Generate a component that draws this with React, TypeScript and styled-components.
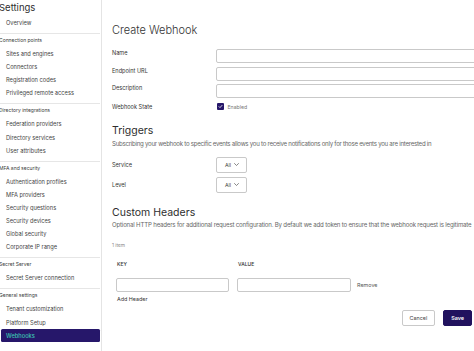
import styled, { createGlobalStyle } from "styled-components";

const GlobalStyle = createGlobalStyle`
  html, body {
    margin: 0;
    padding: 0;
    background: #ffffff;
    font-family: Inter, "Noto Sans", "Liberation Sans", sans-serif;
    color: #333333;
  }
  * {
    box-sizing: border-box;
  }
`;

type NavGroup = {
  title: string;
  items: string[];
};

const NAV_GROUPS: NavGroup[] = [
  {
    title: "Connection points",
    items: ["Sites and engines", "Connectors", "Registration codes", "Privileged remote access"],
  },
  {
    title: "Directory integrations",
    items: ["Federation providers", "Directory services", "User attributes"],
  },
  {
    title: "MFA and security",
    items: [
      "Authentication profiles",
      "MFA providers",
      "Security questions",
      "Security devices",
      "Global security",
      "Corporate IP range",
    ],
  },
  {
    title: "Secret Server",
    items: ["Secret Server connection"],
  },
  {
    title: "General settings",
    items: ["Tenant customization", "Platform Setup", "Webhooks"],
  },
];

const ACTIVE_ITEM = "Webhooks";

const FORM_FIELDS = ["Name", "Endpoint URL", "Description"];

const Chevron = () => (
  <svg width="5" height="3" viewBox="0 0 10 6" fill="none">
    <path d="M1 1l4 4 4-4" stroke="#555" strokeWidth="1.4" strokeLinecap="round" strokeLinejoin="round" />
  </svg>
);

const Check = () => (
  <svg width="5" height="5" viewBox="0 0 10 10" fill="none">
    <path d="M2 5.2l2 2 4-4.4" stroke="#fff" strokeWidth="1.6" strokeLinecap="round" strokeLinejoin="round" />
  </svg>
);

const App = () => {
  return (
    <>
      <GlobalStyle />
      <StyledPage>
        <StyledSidebar>
          <StyledSidebarTitle>Settings</StyledSidebarTitle>
          <StyledGroup>
            <StyledNavItem>Overview</StyledNavItem>
          </StyledGroup>
          {NAV_GROUPS.map((group) => (
            <StyledGroup key={group.title} $divided>
              <StyledGroupTitle>{group.title}</StyledGroupTitle>
              {group.items.map((item) => (
                <StyledNavItem key={item} $active={item === ACTIVE_ITEM}>
                  {item}
                </StyledNavItem>
              ))}
            </StyledGroup>
          ))}
        </StyledSidebar>

        <StyledMain>
          <StyledTitle>Create Webhook</StyledTitle>

          <StyledForm>
            {FORM_FIELDS.map((field) => (
              <StyledFieldRow key={field}>
                <StyledLabel>{field}</StyledLabel>
                <StyledWideInput />
              </StyledFieldRow>
            ))}
            <StyledStateRow>
              <StyledLabel>Webhook State</StyledLabel>
              <StyledCheckbox>
                <Check />
              </StyledCheckbox>
              <StyledCheckLabel>Enabled</StyledCheckLabel>
            </StyledStateRow>
          </StyledForm>

          <StyledSectionTitle $top={12.5}>Triggers</StyledSectionTitle>
          <StyledSectionText $tracking={-0.26}>
            Subscribing your webhook to specific events allows you to receive notifications only for those
            events you are interested in
          </StyledSectionText>

          <StyledSelects>
            {["Service", "Level"].map((name) => (
              <StyledSelectRow key={name}>
                <StyledLabel>{name}</StyledLabel>
                <StyledSelect>
                  All
                  <Chevron />
                </StyledSelect>
              </StyledSelectRow>
            ))}
          </StyledSelects>

          <StyledSectionTitle $top={13}>Custom Headers</StyledSectionTitle>
          <StyledSectionText $tracking={-0.18}>
            Optional HTTP headers for additional request configuration. By default we add token to ensure that
            the webhook request is legitimate
          </StyledSectionText>

          <StyledCount>1 item</StyledCount>

          <StyledHeaderGrid>
            <StyledColumnLabel>KEY</StyledColumnLabel>
            <StyledColumnLabel>VALUE</StyledColumnLabel>
            <span />
            <StyledHeaderInput />
            <StyledHeaderInput />
            <StyledLink>Remove</StyledLink>
          </StyledHeaderGrid>

          <StyledAddLink>Add Header</StyledAddLink>

          <StyledActions>
            <StyledButton>Cancel</StyledButton>
            <StyledButton $primary>Save</StyledButton>
          </StyledActions>
        </StyledMain>
      </StyledPage>
    </>
  );
};

const StyledPage = styled.div`
  display: flex;
  width: 474px;
  height: 351px;
  overflow: hidden;
`;

const StyledSidebar = styled.nav`
  flex: 0 0 102px;
  display: flex;
  flex-direction: column;
  border-right: 1px solid #e4e4e4;
  padding-right: 1px;
`;

const StyledSidebarTitle = styled.div`
  font-size: 9.5px;
  line-height: 16px;
  color: #2e2e2e;
  margin-left: -1px;
`;

const StyledGroup = styled.div<{ $divided?: boolean }>`
  display: flex;
  flex-direction: column;
  padding-bottom: 4px;
  border-top: ${({ $divided }) => ($divided ? "1px solid #e6e6e6" : "none")};
`;

const StyledGroupTitle = styled.div`
  font-size: 5px;
  line-height: 13px;
  color: #3a3a3a;
  margin-left: -1px;
`;

const StyledNavItem = styled.div<{ $active?: boolean }>`
  font-size: 5.7px;
  line-height: 13.1px;
  padding-left: 5px;
  margin-left: 1px;
  border-radius: 1.5px;
  color: ${({ $active }) => ($active ? "#3cc7b3" : "#444")};
  background: ${({ $active }) => ($active ? "#26176a" : "transparent")};
  font-weight: ${({ $active }) => ($active ? 500 : 400)};
`;

const StyledMain = styled.main`
  flex: 1;
  min-width: 0;
  display: flex;
  flex-direction: column;
  padding-left: 10px;
`;

const StyledTitle = styled.h1`
  margin: 20px 0 0;
  font-size: 11px;
  line-height: 20px;
  font-weight: 300;
  color: #333;
`;

const StyledForm = styled.div`
  display: flex;
  flex-direction: column;
  gap: 3.5px;
  margin-top: 9px;
`;

const StyledFieldRow = styled.div`
  display: flex;
  align-items: flex-start;
  height: 14px;
`;

const StyledLabel = styled.span`
  flex: 0 0 104px;
  font-size: 5.6px;
  line-height: 8px;
  color: #333;
`;

const StyledWideInput = styled.div`
  flex: 0 0 270px;
  height: 14px;
  border: 1px solid #c9c9c9;
  border-radius: 2px;
  background: #fff;
`;

const StyledStateRow = styled.div`
  display: flex;
  align-items: center;
  height: 10px;
`;

const StyledCheckbox = styled.span`
  display: inline-flex;
  align-items: center;
  justify-content: center;
  width: 6.5px;
  height: 6.5px;
  margin-left: 1px;
  border-radius: 1px;
  background: #26176a;
`;

const StyledCheckLabel = styled.span`
  margin-left: 4px;
  font-size: 5.2px;
  color: #777;
`;

const StyledSectionTitle = styled.h2<{ $top: number }>`
  margin: ${({ $top }) => $top}px 0 0;
  font-size: 10.5px;
  line-height: 14px;
  font-weight: 400;
  color: #2e2e2e;
`;

const StyledSectionText = styled.p<{ $tracking: number }>`
  margin: 1.5px 0 0;
  font-size: 6.1px;
  letter-spacing: ${({ $tracking }) => $tracking}px;
  line-height: 8px;
  color: #666;
  white-space: nowrap;
`;

const StyledSelects = styled.div`
  display: flex;
  flex-direction: column;
  gap: 4px;
  margin-top: 9px;
`;

const StyledSelectRow = styled.div`
  display: flex;
  align-items: center;
`;

const StyledSelect = styled.span`
  display: inline-flex;
  align-items: center;
  gap: 3px;
  width: 31px;
  height: 16px;
  padding-left: 8px;
  border: 1px solid #c9c9c9;
  border-radius: 2px;
  font-size: 5.2px;
  color: #444;
`;

const StyledCount = styled.div`
  margin-top: 12px;
  font-size: 4.8px;
  line-height: 8px;
  color: #888;
`;

const StyledHeaderGrid = styled.div`
  display: grid;
  grid-template-columns: 113px 114px auto;
  grid-template-rows: 8px 14px;
  column-gap: 8px;
  row-gap: 10px;
  align-items: center;
  margin-top: 11px;
  padding-left: 4px;
`;

const StyledColumnLabel = styled.span`
  padding-left: 1px;
  font-size: 5px;
  font-weight: 500;
  color: #333;
`;

const StyledHeaderInput = styled.div`
  height: 14px;
  border: 1px solid #c9c9c9;
  border-radius: 2px;
  background: #fff;
`;

const StyledLink = styled.span`
  font-size: 5.4px;
  color: #555;
  margin-left: -2px;
`;

const StyledAddLink = styled.div`
  margin-top: 3px;
  padding-left: 5px;
  font-size: 5.4px;
  line-height: 8px;
  color: #333;
`;

const StyledActions = styled.div`
  display: flex;
  justify-content: flex-end;
  gap: 8px;
  margin-top: 7px;
  padding-right: 2px;
`;

const StyledButton = styled.button<{ $primary?: boolean }>`
  height: 16px;
  padding: 0 7px;
  font-family: inherit;
  font-size: 5.4px;
  font-weight: ${({ $primary }) => ($primary ? 600 : 400)};
  border-radius: 2px;
  border: 1px solid ${({ $primary }) => ($primary ? "#21125e" : "#c9c9c9")};
  background: ${({ $primary }) => ($primary ? "#21125e" : "#fff")};
  color: ${({ $primary }) => ($primary ? "#fff" : "#444")};
  min-width: ${({ $primary }) => ($primary ? "28px" : "33px")};
`;

export default App;
